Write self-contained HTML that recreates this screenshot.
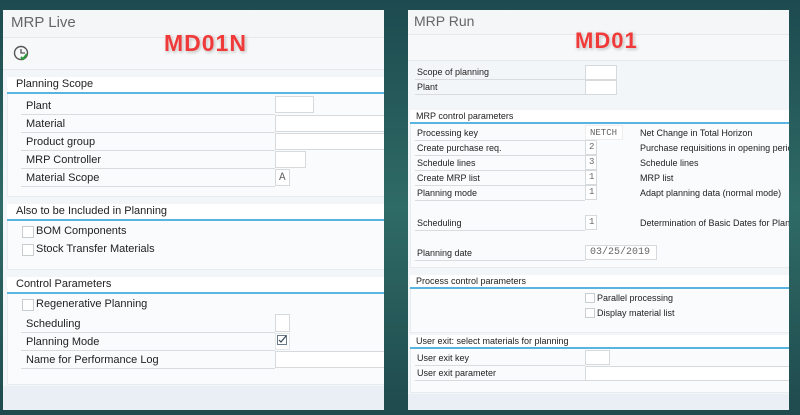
<!DOCTYPE html>
<html><head><style>
*{margin:0;padding:0;box-sizing:border-box}
body{width:800px;height:415px;overflow:hidden;background:linear-gradient(180deg,#1d4a4f 0%,#2f6b66 50%,#1f4a4e 100%);font-family:"Liberation Sans",sans-serif;position:relative}
.p{position:absolute;background:#f3f6f9;overflow:hidden}
.a{position:absolute}
.t{position:absolute;color:#666;font-size:15px}
.band{position:absolute;left:0;right:0;background:#f7f8f9;border-bottom:1px solid #e6e8ea}
.sec{position:absolute;background:#f9fbfc;border:1px solid #e8ecef}
.hd{position:absolute;left:0;right:0;background:#fff;border-bottom:2px solid #5ab4e0;color:#222}
.lb{position:absolute;color:#222;border-bottom:1px solid #d8dcdf}
.in{position:absolute;background:#fff;border:1px solid #d6dadd}
.cb{position:absolute;width:12px;height:12px;background:#fff;border:1px solid #c8cdd0}
.red{position:absolute;color:#f03a3a;font-weight:bold;text-shadow:0 0 3px #fff,1px 1px 3px #999;letter-spacing:1px}
.mono{font-family:"Liberation Mono",monospace;color:#666}
</style></head><body>
<!-- left panel -->
<div class="p" style="left:3px;top:10px;width:381px;height:400px">
<div class="band" style="top:0;height:28px;background:#f5f6f7"></div>
<div class="t" style="left:8px;top:4px">MRP Live</div>
<div class="band" style="top:28px;height:32px;background:#f7f8f9"></div>
<svg class="a" style="left:9px;top:34px" width="20" height="20" viewBox="0 0 20 20"><circle cx="9" cy="9" r="6.5" fill="none" stroke="#555" stroke-width="1.4"/><path d="M9 5v4h4" fill="none" stroke="#555" stroke-width="1.3"/><path d="M9 13l2 2 4-5" fill="none" stroke="#2a9a3a" stroke-width="2"/></svg>
<div class="sec" style="left:4px;top:67px;width:380px;height:120px"></div>
<div class="hd" style="left:4px;top:67px;height:17px;font-size:11px;padding:1px 0 0 9px">Planning Scope</div>
<div class="lb" style="left:18px;top:87px;width:254px;height:18px;font-size:11px;padding:3px 0 0 5px">Plant</div>
<div class="in" style="left:272px;top:86px;width:39px;height:17px"></div>
<div class="lb" style="left:18px;top:105px;width:254px;height:18px;font-size:11px;padding:3px 0 0 5px">Material</div>
<div class="in" style="left:272px;top:105px;width:120px;height:17px"></div>
<div class="lb" style="left:18px;top:123px;width:254px;height:18px;font-size:11px;padding:3px 0 0 5px">Product group</div>
<div class="in" style="left:272px;top:123px;width:120px;height:17px"></div>
<div class="lb" style="left:18px;top:141px;width:254px;height:18px;font-size:11px;padding:3px 0 0 5px">MRP Controller</div>
<div class="in" style="left:272px;top:141px;width:31px;height:17px"></div>
<div class="lb" style="left:18px;top:159px;width:254px;height:18px;font-size:11px;padding:3px 0 0 5px">Material Scope</div>
<div class="in mono" style="left:272px;top:159px;width:15px;height:17px;font-size:11px;padding:2px 0 0 3px">A</div>

<div class="sec" style="left:4px;top:194px;width:380px;height:66px"></div>
<div class="hd" style="left:4px;top:194px;height:17px;font-size:11px;padding:1px 0 0 9px">Also to be Included in Planning</div>
<div class="cb" style="left:19px;top:216px"></div>
<div class="a" style="left:33px;top:215px;font-size:11px;color:#222">BOM Components</div>
<div class="cb" style="left:19px;top:234px"></div>
<div class="a" style="left:33px;top:233px;font-size:11px;color:#222">Stock Transfer Materials</div>

<div class="sec" style="left:4px;top:267px;width:380px;height:108px"></div>
<div class="hd" style="left:4px;top:267px;height:17px;font-size:11px;padding:1px 0 0 9px">Control Parameters</div>
<div class="cb" style="left:19px;top:289px"></div>
<div class="a" style="left:33px;top:288px;font-size:11px;color:#222">Regenerative Planning</div>
<div class="lb" style="left:18px;top:305px;width:254px;height:18px;font-size:11px;padding:3px 0 0 5px">Scheduling</div>
<div class="in" style="left:272px;top:304px;width:15px;height:18px"></div>
<div class="lb" style="left:18px;top:323px;width:254px;height:18px;font-size:11px;padding:3px 0 0 5px">Planning Mode</div>
<div class="in" style="left:272px;top:323px;width:15px;height:17px;border-color:#e4e7ea"></div>
<svg class="a" style="left:274px;top:325px" width="11" height="11" viewBox="0 0 11 11"><rect x="0.5" y="0.5" width="9" height="9" fill="#fff" stroke="#6a7a88"/><path d="M2 5l2 2 5-6" fill="none" stroke="#345" stroke-width="1.2"/></svg>
<div class="lb" style="left:18px;top:341px;width:254px;height:18px;font-size:11px;padding:3px 0 0 5px">Name for Performance Log</div>
<div class="in" style="left:272px;top:341px;width:120px;height:17px"></div>
<div class="a" style="left:0;top:376px;width:381px;height:24px;background:#e9eff5"></div>
<div class="red" style="left:161px;top:20px;font-size:23px">MD01N</div>
</div>

<!-- right panel -->
<div class="p" style="left:408px;top:10px;width:381px;height:400px">
<div class="band" style="top:0;height:25px;background:#f5f6f7"></div>
<div class="t" style="left:6px;top:3px;font-size:14px">MRP Run</div>
<div class="band" style="top:25px;height:26px;background:#f7f8f9"></div>
<div class="lb" style="left:7px;top:55px;width:170px;height:15px;font-size:9px;padding:2px 0 0 2px">Scope of planning</div>
<div class="in" style="left:177px;top:55px;width:32px;height:15px"></div>
<div class="lb" style="left:7px;top:70px;width:170px;height:15px;font-size:9px;padding:2px 0 0 2px">Plant</div>
<div class="in" style="left:177px;top:70px;width:32px;height:15px"></div>

<div class="sec" style="left:2px;top:100px;width:381px;height:158px"></div>
<div class="hd" style="left:2px;top:100px;height:14px;font-size:9px;padding:1px 0 0 6px">MRP control parameters</div>
<div class="lb" style="left:7px;top:116px;width:170px;height:15px;font-size:9px;padding:2px 0 0 2px">Processing key</div>
<div class="in mono" style="left:177px;top:115px;width:38px;height:15px;font-size:9px;padding:2px 0 0 4px;border-color:#eee">NETCH</div>
<div class="a" style="left:232px;top:118px;font-size:9px;color:#222">Net Change in Total Horizon</div>
<div class="lb" style="left:7px;top:131px;width:170px;height:15px;font-size:9px;padding:2px 0 0 2px">Create purchase req.</div>
<div class="in mono" style="left:177px;top:130px;width:12px;height:15px;font-size:9px;padding:1px 0 0 3px">2</div>
<div class="a" style="left:232px;top:133px;font-size:9px;color:#222;white-space:nowrap">Purchase requisitions in opening perio</div>
<div class="lb" style="left:7px;top:146px;width:170px;height:15px;font-size:9px;padding:2px 0 0 2px">Schedule lines</div>
<div class="in mono" style="left:177px;top:145px;width:12px;height:15px;font-size:9px;padding:1px 0 0 3px">3</div>
<div class="a" style="left:232px;top:148px;font-size:9px;color:#222">Schedule lines</div>
<div class="lb" style="left:7px;top:161px;width:170px;height:15px;font-size:9px;padding:2px 0 0 2px">Create MRP list</div>
<div class="in mono" style="left:177px;top:160px;width:12px;height:15px;font-size:9px;padding:1px 0 0 3px">1</div>
<div class="a" style="left:232px;top:163px;font-size:9px;color:#222">MRP list</div>
<div class="lb" style="left:7px;top:176px;width:170px;height:15px;font-size:9px;padding:2px 0 0 2px">Planning mode</div>
<div class="in mono" style="left:177px;top:175px;width:12px;height:15px;font-size:9px;padding:1px 0 0 3px">1</div>
<div class="a" style="left:232px;top:178px;font-size:9px;color:#222">Adapt planning data (normal mode)</div>
<div class="lb" style="left:7px;top:206px;width:170px;height:15px;font-size:9px;padding:2px 0 0 2px">Scheduling</div>
<div class="in mono" style="left:177px;top:205px;width:12px;height:15px;font-size:9px;padding:1px 0 0 3px">1</div>
<div class="a" style="left:232px;top:208px;font-size:9px;color:#222;white-space:nowrap">Determination of Basic Dates for Plann</div>
<div class="lb" style="left:7px;top:236px;width:170px;height:15px;font-size:9px;padding:2px 0 0 2px">Planning date</div>
<div class="in mono" style="left:177px;top:235px;width:72px;height:15px;font-size:10px;padding:1px 0 0 4px">03/25/2019</div>

<div class="sec" style="left:2px;top:265px;width:381px;height:58px"></div>
<div class="hd" style="left:2px;top:265px;height:14px;font-size:9px;padding:1px 0 0 6px">Process control parameters</div>
<div class="cb" style="left:177px;top:283px;width:10px;height:10px"></div>
<div class="a" style="left:189px;top:283px;font-size:9px;color:#222">Parallel processing</div>
<div class="cb" style="left:177px;top:298px;width:10px;height:10px"></div>
<div class="a" style="left:189px;top:298px;font-size:9px;color:#222">Display material list</div>

<div class="sec" style="left:2px;top:325px;width:381px;height:58px"></div>
<div class="hd" style="left:2px;top:325px;height:14px;font-size:9px;padding:1px 0 0 6px">User exit: select materials for planning</div>
<div class="lb" style="left:7px;top:341px;width:170px;height:15px;font-size:9px;padding:2px 0 0 2px">User exit key</div>
<div class="in" style="left:177px;top:340px;width:25px;height:15px"></div>
<div class="lb" style="left:7px;top:356px;width:170px;height:15px;font-size:9px;padding:2px 0 0 2px">User exit parameter</div>
<div class="in" style="left:177px;top:356px;width:210px;height:15px"></div>
<div class="a" style="left:0;top:384px;width:381px;height:16px;background:#e9eff5"></div>
<div class="red" style="left:167px;top:18px;font-size:22px">MD01</div>
</div>
</body></html>
